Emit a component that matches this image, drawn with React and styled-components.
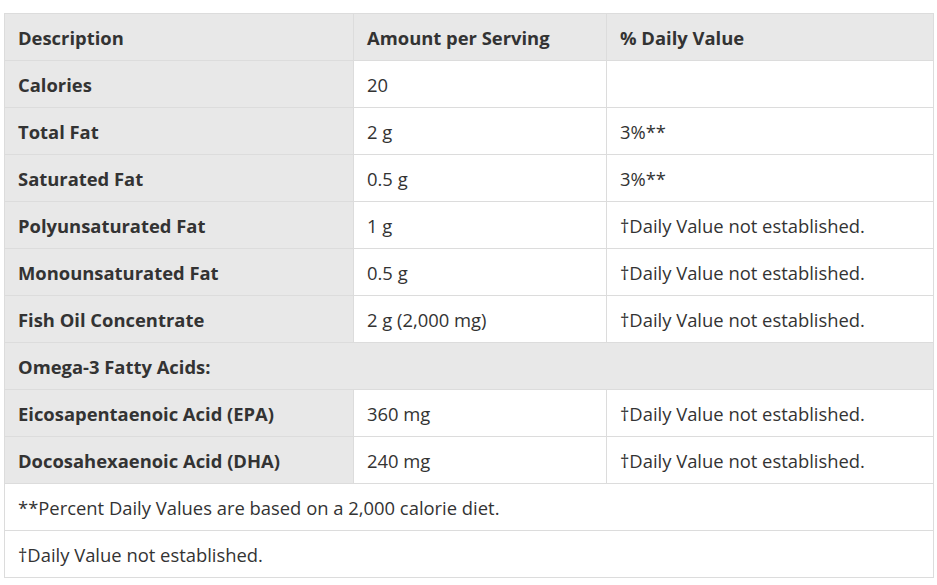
import styled, { createGlobalStyle } from 'styled-components';

const GlobalStyle = createGlobalStyle`
  body {
    margin: 0;
    background: #fff;
    font-family: "Open Sans", "Liberation Sans", sans-serif;
    color: #333;
  }
`;

const rows = [
  ['Calories', '20', ''],
  ['Total Fat', '2 g', '3%**'],
  ['Saturated Fat', '0.5 g', '3%**'],
  ['Polyunsaturated Fat', '1 g', '†Daily Value not established.'],
  ['Monounsaturated Fat', '0.5 g', '†Daily Value not established.'],
  ['Fish Oil Concentrate', '2 g (2,000 mg)', '†Daily Value not established.'],
];

const omega = [
  ['Eicosapentaenoic Acid (EPA)', '360 mg', '†Daily Value not established.'],
  ['Docosahexaenoic Acid (DHA)', '240 mg', '†Daily Value not established.'],
];

function App() {
  return (
    <Page>
      <GlobalStyle />
      <Table>
        <colgroup>
          <col style={{ width: 349 }} />
          <col style={{ width: 253 }} />
          <col />
        </colgroup>
        <thead>
          <tr>
            <Head>Description</Head>
            <Head>Amount per Serving</Head>
            <Head>% Daily Value</Head>
          </tr>
        </thead>
        <tbody>
          {rows.map((r) => (
            <tr key={r[0]}>
              <Label>{r[0]}</Label>
              <Cell>{r[1]}</Cell>
              <Cell>{r[2]}</Cell>
            </tr>
          ))}
          <tr>
            <Label colSpan={3}>Omega-3 Fatty Acids:</Label>
          </tr>
          {omega.map((r) => (
            <tr key={r[0]}>
              <Label>{r[0]}</Label>
              <Cell>{r[1]}</Cell>
              <Cell>{r[2]}</Cell>
            </tr>
          ))}
          <tr>
            <Cell colSpan={3}>**Percent Daily Values are based on a 2,000 calorie diet.</Cell>
          </tr>
          <tr>
            <Cell colSpan={3}>†Daily Value not established.</Cell>
          </tr>
        </tbody>
      </Table>
    </Page>
  );
}

export default App;

const Page = styled.div`
  padding: 13px 3px 0 4px;
`;

const Table = styled.table`
  width: 930px;
  border-collapse: collapse;
  table-layout: fixed;
  font-size: 18.4px;
  line-height: 26px;
`;

const Cell = styled.td`
  border: 1px solid #dcdcdc;
  padding: 11px 13px 9px 13px;
  height: 26px;
  text-align: left;
  vertical-align: middle;
  background: #fff;
  font-weight: 400;
  white-space: nowrap;
`;

const Label = styled(Cell)`
  background: #e8e8e8;
  font-weight: 700;
`;

const Head = styled.th`
  border: 1px solid #dcdcdc;
  padding: 11px 13px 9px 13px;
  height: 26px;
  text-align: left;
  background: #e8e8e8;
  font-weight: 700;
  white-space: nowrap;
`;
